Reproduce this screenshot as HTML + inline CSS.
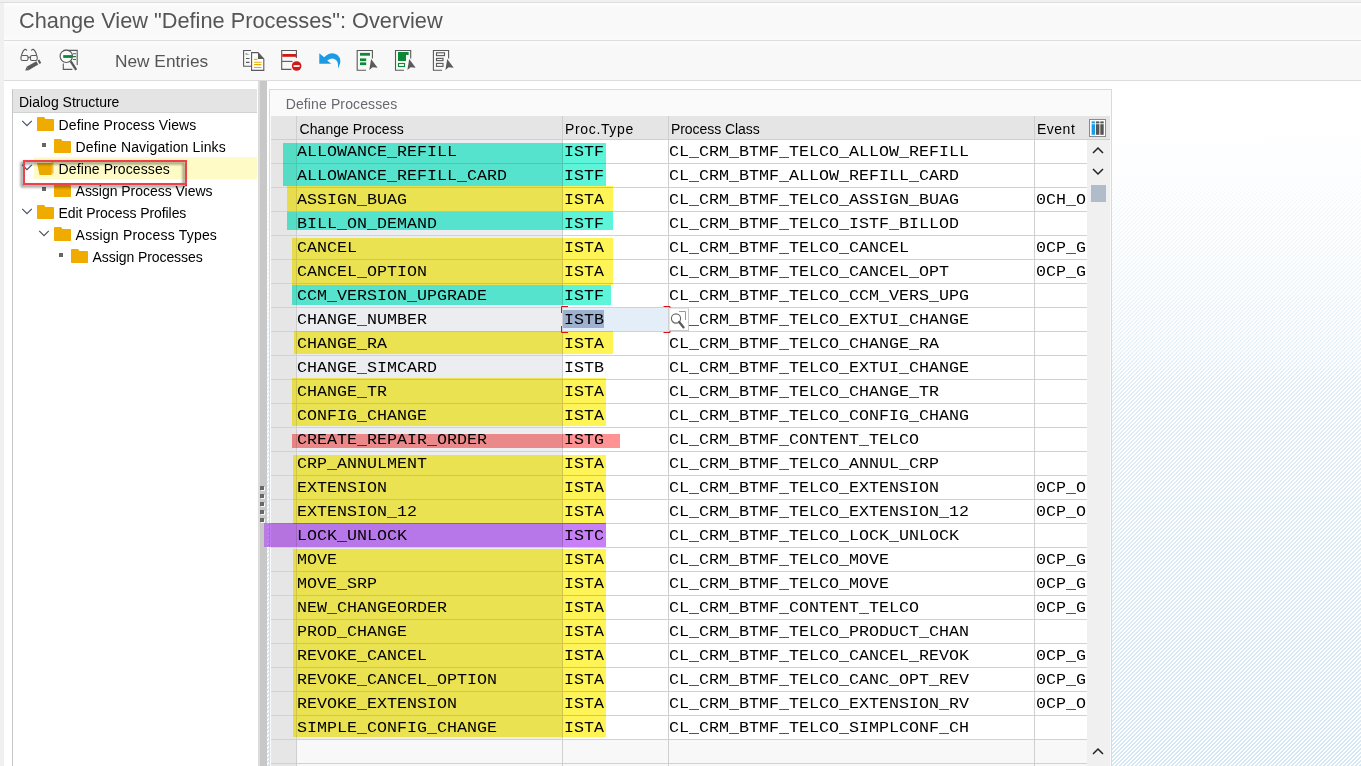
<!DOCTYPE html>
<html lang="en"><head><meta charset="utf-8"><title>Change View "Define Processes": Overview</title>
<style>
html,body{margin:0;padding:0}
body{width:1361px;height:766px;overflow:hidden;position:relative;background:#fff;font-family:"Liberation Sans",sans-serif;font-size:14px;color:#000}
.a{position:absolute}
.t{position:absolute;white-space:nowrap;line-height:1}
.m{position:absolute;white-space:nowrap;line-height:16px;height:16px;font-family:"Liberation Mono",monospace;font-size:14px;transform:scaleX(1.1905);transform-origin:0 0;color:#000}
.hl{position:absolute;mix-blend-mode:multiply}
.cy{background:#5df5da}.ye{background:#fff455}.rd{background:#ff9292}.pu{background:#c880f6}
.rl{position:absolute;left:271px;width:816px;height:1px;background:#d2d2d2}
.cl{position:absolute;top:116px;width:1px;height:650px;background:#cfcfcf}
svg{position:absolute;overflow:visible}
</style></head><body>

<div class="a" style="left:0;top:0;width:1361px;height:2px;background:#f0f0f0"></div>
<div class="a" style="left:0;top:2px;width:1361px;height:1px;background:#dedede"></div>
<div class="a" style="left:0;top:3px;width:1361px;height:37px;background:linear-gradient(#fdfdfd,#f9f9f9 6px,#f9f9f9 30px,#fbfbfb)"></div>
<div class="a" style="left:0;top:40px;width:1361px;height:1px;background:#dedede"></div>
<div class="a" style="left:0;top:41px;width:1361px;height:39px;background:linear-gradient(#fcfcfc,#f8f8f8 6px)"></div>
<div class="a" style="left:0;top:80px;width:1361px;height:1px;background:#dcdcdc"></div>
<div class="a" style="left:0;top:3px;width:4px;height:763px;background:#f0f0f0"></div>
<div class="a" style="left:267px;top:81px;width:1094px;height:685px;background:linear-gradient(to bottom,rgba(255,255,255,1) 0,rgba(255,255,255,1) 49px,rgba(255,255,255,0.3) 339px,rgba(255,255,255,0.04) 100%),repeating-linear-gradient(135deg,#d2e6f4 0,#d2e6f4 1.4px,#fff 1.4px,#fff 2.83px)"></div>
<div class="t" id="title" style="left:19px;top:10px;font-size:21.75px;color:#555">Change View "Define Processes": Overview</div>
<div class="t" id="newent" style="left:115px;top:53px;font-size:17.3px;color:#555">New Entries</div>
<div class="a" style="left:12px;top:89px;width:246px;height:677px;background:#fff;border-left:1px solid #c6c6c6;box-sizing:border-box"></div>
<div class="a" style="left:12px;top:89px;width:245px;height:24px;background:#e4e4e4;border-left:1px solid #c6c6c6;border-bottom:1px solid #d2d2d2;box-sizing:border-box"></div>
<div class="t" id="dlg" style="left:19px;top:95px">Dialog Structure</div>
<div class="a" style="left:34px;top:157px;width:223px;height:22px;background:#fffbc6"></div>
<svg style="left:21px;top:119px" width="12" height="9" viewBox="0 0 12 9"><path d="M1.2 1.8 L6 6.6 L10.8 1.8" fill="none" stroke="#4a5264" stroke-width="1.2"/></svg>
<svg style="left:37px;top:117px" width="17" height="14" viewBox="0 0 17 14"><path d="M0.8 0 H7 L8.5 2 H16.2 Q17 2 17 2.8 V13.2 Q17 14 16.2 14 H0.8 Q0 14 0 13.2 V0.8 Q0 0 0.8 0Z" fill="#f0ab00"/></svg>
<div class="t" id="tr0" style="left:58.6px;top:118px;letter-spacing:0.09px">Define Process Views</div>
<div class="a" style="left:42px;top:143px;width:3.5px;height:3.5px;background:#666"></div>
<svg style="left:54px;top:139px" width="17" height="14" viewBox="0 0 17 14"><path d="M0.8 0 H7 L8.5 2 H16.2 Q17 2 17 2.8 V13.2 Q17 14 16.2 14 H0.8 Q0 14 0 13.2 V0.8 Q0 0 0.8 0Z" fill="#f0ab00"/></svg>
<div class="t" id="tr1" style="left:75.6px;top:140px;letter-spacing:0.14px">Define Navigation Links</div>
<svg style="left:21px;top:163px" width="12" height="9" viewBox="0 0 12 9"><path d="M1.2 1.8 L6 6.6 L10.8 1.8" fill="none" stroke="#4a5264" stroke-width="1.2"/></svg>
<svg style="left:37px;top:161px" width="17" height="14" viewBox="0 0 17 14"><path d="M0 2 H16 L14.5 14 H2.5 Z" fill="#eba900"/><path d="M14.5 0.5 H16.5 V12 L14.5 14Z" fill="#f5c040"/></svg>
<div class="t" id="tr2" style="left:58.6px;top:162px;letter-spacing:0.1px">Define Processes</div>
<div class="a" style="left:42px;top:187px;width:3.5px;height:3.5px;background:#666"></div>
<svg style="left:54px;top:183px" width="17" height="14" viewBox="0 0 17 14"><path d="M0.8 0 H7 L8.5 2 H16.2 Q17 2 17 2.8 V13.2 Q17 14 16.2 14 H0.8 Q0 14 0 13.2 V0.8 Q0 0 0.8 0Z" fill="#f0ab00"/></svg>
<div class="t" id="tr3" style="left:75.6px;top:184px;letter-spacing:-0.03px">Assign Process Views</div>
<svg style="left:21px;top:207px" width="12" height="9" viewBox="0 0 12 9"><path d="M1.2 1.8 L6 6.6 L10.8 1.8" fill="none" stroke="#4a5264" stroke-width="1.2"/></svg>
<svg style="left:37px;top:205px" width="17" height="14" viewBox="0 0 17 14"><path d="M0.8 0 H7 L8.5 2 H16.2 Q17 2 17 2.8 V13.2 Q17 14 16.2 14 H0.8 Q0 14 0 13.2 V0.8 Q0 0 0.8 0Z" fill="#f0ab00"/></svg>
<div class="t" id="tr4" style="left:58.6px;top:206px;letter-spacing:-0.07px">Edit Process Profiles</div>
<svg style="left:38px;top:229px" width="12" height="9" viewBox="0 0 12 9"><path d="M1.2 1.8 L6 6.6 L10.8 1.8" fill="none" stroke="#4a5264" stroke-width="1.2"/></svg>
<svg style="left:54px;top:227px" width="17" height="14" viewBox="0 0 17 14"><path d="M0.8 0 H7 L8.5 2 H16.2 Q17 2 17 2.8 V13.2 Q17 14 16.2 14 H0.8 Q0 14 0 13.2 V0.8 Q0 0 0.8 0Z" fill="#f0ab00"/></svg>
<div class="t" id="tr5" style="left:75.6px;top:228px;letter-spacing:0.2px">Assign Process Types</div>
<div class="a" style="left:59px;top:253px;width:3.5px;height:3.5px;background:#666"></div>
<svg style="left:71px;top:249px" width="17" height="14" viewBox="0 0 17 14"><path d="M0.8 0 H7 L8.5 2 H16.2 Q17 2 17 2.8 V13.2 Q17 14 16.2 14 H0.8 Q0 14 0 13.2 V0.8 Q0 0 0.8 0Z" fill="#f0ab00"/></svg>
<div class="t" id="tr6" style="left:92.6px;top:250px;letter-spacing:-0.08px">Assign Processes</div>
<div class="a" style="left:23px;top:160px;width:164px;height:25px;box-sizing:border-box;border:2.6px solid #f04048;filter:drop-shadow(-1.5px 2.5px 1.6px rgba(0,0,0,0.55))"></div>
<div class="a" style="left:258px;top:81px;width:9px;height:685px;background:linear-gradient(to right,#dcdcdc 0,#dcdcdc 1.5px,#c8c8c8 2.5px)"></div>
<div class="a" style="left:260px;top:486px;width:4px;height:4px;background:#686868;box-shadow:1px 1px 0 #f6f6f6"></div>
<div class="a" style="left:260px;top:494px;width:4px;height:4px;background:#686868;box-shadow:1px 1px 0 #f6f6f6"></div>
<div class="a" style="left:260px;top:502px;width:4px;height:4px;background:#686868;box-shadow:1px 1px 0 #f6f6f6"></div>
<div class="a" style="left:260px;top:510px;width:4px;height:4px;background:#686868;box-shadow:1px 1px 0 #f6f6f6"></div>
<div class="a" style="left:260px;top:518px;width:4px;height:4px;background:#686868;box-shadow:1px 1px 0 #f6f6f6"></div>
<div class="a" style="left:269px;top:89px;width:843px;height:680px;background:#fafafa;border:1px solid #dadada;box-sizing:border-box"></div>
<div class="t" id="grp" style="left:285.7px;top:97px;color:#686870;letter-spacing:0.12px">Define Processes</div>
<div class="a" style="left:271px;top:116px;width:839px;height:23px;background:#e5e5e5"></div>
<div class="a" style="left:271px;top:139px;width:25px;height:627px;background:#e6e6e6"></div>
<div class="a" style="left:297px;top:139px;width:790px;height:600px;background:#fff"></div>
<div class="a" style="left:297px;top:139px;width:265px;height:600px;background:#ebedf1"></div>
<div class="a" style="left:297px;top:739px;width:790px;height:30px;background:#f8f8f8"></div>
<div class="a" style="left:1087px;top:139px;width:23px;height:627px;background:#f0f0f0"></div>
<div class="t" id="h1" style="left:299.6px;top:122px;letter-spacing:0.05px">Change Process</div>
<div class="t" id="h2" style="left:565px;top:122px;letter-spacing:0.65px">Proc.Type</div>
<div class="t" id="h3" style="left:671px;top:122px;letter-spacing:-0.07px">Process Class</div>
<div class="t" id="h4" style="left:1037px;top:122px;letter-spacing:0.5px">Event</div>
<div class="a" style="left:563px;top:308px;width:105px;height:23px;background:#e3eef8"></div>
<div class="a" style="left:563px;top:310px;width:41px;height:18px;background:#9eb1cf"></div>
<div class="m" style="left:297px;top:144px">ALLOWANCE_REFILL</div>
<div class="m" style="left:563.7px;top:144px">ISTF</div>
<div class="m" style="left:669.2px;top:144px">CL_CRM_BTMF_TELCO_ALLOW_REFILL</div>
<div class="m" style="left:297px;top:168px">ALLOWANCE_REFILL_CARD</div>
<div class="m" style="left:563.7px;top:168px">ISTF</div>
<div class="m" style="left:669.2px;top:168px">CL_CRM_BTMF_ALLOW_REFILL_CARD</div>
<div class="m" style="left:297px;top:192px">ASSIGN_BUAG</div>
<div class="m" style="left:563.7px;top:192px">ISTA</div>
<div class="m" style="left:669.2px;top:192px">CL_CRM_BTMF_TELCO_ASSIGN_BUAG</div>
<div class="a" style="left:1035px;top:188px;width:51px;height:22px;overflow:hidden"><div class="m" style="left:1px;top:4px">0CH_O</div></div>
<div class="m" style="left:297px;top:216px">BILL_ON_DEMAND</div>
<div class="m" style="left:563.7px;top:216px">ISTF</div>
<div class="m" style="left:669.2px;top:216px">CL_CRM_BTMF_TELCO_ISTF_BILLOD</div>
<div class="m" style="left:297px;top:240px">CANCEL</div>
<div class="m" style="left:563.7px;top:240px">ISTA</div>
<div class="m" style="left:669.2px;top:240px">CL_CRM_BTMF_TELCO_CANCEL</div>
<div class="a" style="left:1035px;top:236px;width:51px;height:22px;overflow:hidden"><div class="m" style="left:1px;top:4px">0CP_G</div></div>
<div class="m" style="left:297px;top:264px">CANCEL_OPTION</div>
<div class="m" style="left:563.7px;top:264px">ISTA</div>
<div class="m" style="left:669.2px;top:264px">CL_CRM_BTMF_TELCO_CANCEL_OPT</div>
<div class="a" style="left:1035px;top:260px;width:51px;height:22px;overflow:hidden"><div class="m" style="left:1px;top:4px">0CP_G</div></div>
<div class="m" style="left:297px;top:288px">CCM_VERSION_UPGRADE</div>
<div class="m" style="left:563.7px;top:288px">ISTF</div>
<div class="m" style="left:669.2px;top:288px">CL_CRM_BTMF_TELCO_CCM_VERS_UPG</div>
<div class="m" style="left:297px;top:312px">CHANGE_NUMBER</div>
<div class="m" style="left:563.7px;top:312px">ISTB</div>
<div class="m" style="left:669.2px;top:312px">CL_CRM_BTMF_TELCO_EXTUI_CHANGE</div>
<div class="m" style="left:297px;top:336px">CHANGE_RA</div>
<div class="m" style="left:563.7px;top:336px">ISTA</div>
<div class="m" style="left:669.2px;top:336px">CL_CRM_BTMF_TELCO_CHANGE_RA</div>
<div class="m" style="left:297px;top:360px">CHANGE_SIMCARD</div>
<div class="m" style="left:563.7px;top:360px">ISTB</div>
<div class="m" style="left:669.2px;top:360px">CL_CRM_BTMF_TELCO_EXTUI_CHANGE</div>
<div class="m" style="left:297px;top:384px">CHANGE_TR</div>
<div class="m" style="left:563.7px;top:384px">ISTA</div>
<div class="m" style="left:669.2px;top:384px">CL_CRM_BTMF_TELCO_CHANGE_TR</div>
<div class="m" style="left:297px;top:408px">CONFIG_CHANGE</div>
<div class="m" style="left:563.7px;top:408px">ISTA</div>
<div class="m" style="left:669.2px;top:408px">CL_CRM_BTMF_TELCO_CONFIG_CHANG</div>
<div class="m" style="left:297px;top:432px">CREATE_REPAIR_ORDER</div>
<div class="m" style="left:563.7px;top:432px">ISTG</div>
<div class="m" style="left:669.2px;top:432px">CL_CRM_BTMF_CONTENT_TELCO</div>
<div class="m" style="left:297px;top:456px">CRP_ANNULMENT</div>
<div class="m" style="left:563.7px;top:456px">ISTA</div>
<div class="m" style="left:669.2px;top:456px">CL_CRM_BTMF_TELCO_ANNUL_CRP</div>
<div class="m" style="left:297px;top:480px">EXTENSION</div>
<div class="m" style="left:563.7px;top:480px">ISTA</div>
<div class="m" style="left:669.2px;top:480px">CL_CRM_BTMF_TELCO_EXTENSION</div>
<div class="a" style="left:1035px;top:476px;width:51px;height:22px;overflow:hidden"><div class="m" style="left:1px;top:4px">0CP_O</div></div>
<div class="m" style="left:297px;top:504px">EXTENSION_12</div>
<div class="m" style="left:563.7px;top:504px">ISTA</div>
<div class="m" style="left:669.2px;top:504px">CL_CRM_BTMF_TELCO_EXTENSION_12</div>
<div class="a" style="left:1035px;top:500px;width:51px;height:22px;overflow:hidden"><div class="m" style="left:1px;top:4px">0CP_O</div></div>
<div class="m" style="left:297px;top:528px">LOCK_UNLOCK</div>
<div class="m" style="left:563.7px;top:528px">ISTC</div>
<div class="m" style="left:669.2px;top:528px">CL_CRM_BTMF_TELCO_LOCK_UNLOCK</div>
<div class="m" style="left:297px;top:552px">MOVE</div>
<div class="m" style="left:563.7px;top:552px">ISTA</div>
<div class="m" style="left:669.2px;top:552px">CL_CRM_BTMF_TELCO_MOVE</div>
<div class="a" style="left:1035px;top:548px;width:51px;height:22px;overflow:hidden"><div class="m" style="left:1px;top:4px">0CP_G</div></div>
<div class="m" style="left:297px;top:576px">MOVE_SRP</div>
<div class="m" style="left:563.7px;top:576px">ISTA</div>
<div class="m" style="left:669.2px;top:576px">CL_CRM_BTMF_TELCO_MOVE</div>
<div class="a" style="left:1035px;top:572px;width:51px;height:22px;overflow:hidden"><div class="m" style="left:1px;top:4px">0CP_G</div></div>
<div class="m" style="left:297px;top:600px">NEW_CHANGEORDER</div>
<div class="m" style="left:563.7px;top:600px">ISTA</div>
<div class="m" style="left:669.2px;top:600px">CL_CRM_BTMF_CONTENT_TELCO</div>
<div class="a" style="left:1035px;top:596px;width:51px;height:22px;overflow:hidden"><div class="m" style="left:1px;top:4px">0CP_G</div></div>
<div class="m" style="left:297px;top:624px">PROD_CHANGE</div>
<div class="m" style="left:563.7px;top:624px">ISTA</div>
<div class="m" style="left:669.2px;top:624px">CL_CRM_BTMF_TELCO_PRODUCT_CHAN</div>
<div class="m" style="left:297px;top:648px">REVOKE_CANCEL</div>
<div class="m" style="left:563.7px;top:648px">ISTA</div>
<div class="m" style="left:669.2px;top:648px">CL_CRM_BTMF_TELCO_CANCEL_REVOK</div>
<div class="a" style="left:1035px;top:644px;width:51px;height:22px;overflow:hidden"><div class="m" style="left:1px;top:4px">0CP_G</div></div>
<div class="m" style="left:297px;top:672px">REVOKE_CANCEL_OPTION</div>
<div class="m" style="left:563.7px;top:672px">ISTA</div>
<div class="m" style="left:669.2px;top:672px">CL_CRM_BTMF_TELCO_CANC_OPT_REV</div>
<div class="a" style="left:1035px;top:668px;width:51px;height:22px;overflow:hidden"><div class="m" style="left:1px;top:4px">0CP_G</div></div>
<div class="m" style="left:297px;top:696px">REVOKE_EXTENSION</div>
<div class="m" style="left:563.7px;top:696px">ISTA</div>
<div class="m" style="left:669.2px;top:696px">CL_CRM_BTMF_TELCO_EXTENSION_RV</div>
<div class="a" style="left:1035px;top:692px;width:51px;height:22px;overflow:hidden"><div class="m" style="left:1px;top:4px">0CP_O</div></div>
<div class="m" style="left:297px;top:720px">SIMPLE_CONFIG_CHANGE</div>
<div class="m" style="left:563.7px;top:720px">ISTA</div>
<div class="m" style="left:669.2px;top:720px">CL_CRM_BTMF_TELCO_SIMPLCONF_CH</div>
<div class="a" style="left:271px;top:139px;width:839px;height:1px;background:#cfcfcf"></div>
<div class="rl" style="top:163px"></div>
<div class="rl" style="top:187px"></div>
<div class="rl" style="top:211px"></div>
<div class="rl" style="top:235px"></div>
<div class="rl" style="top:259px"></div>
<div class="rl" style="top:283px"></div>
<div class="rl" style="top:307px"></div>
<div class="rl" style="top:331px"></div>
<div class="rl" style="top:355px"></div>
<div class="rl" style="top:379px"></div>
<div class="rl" style="top:403px"></div>
<div class="rl" style="top:427px"></div>
<div class="rl" style="top:451px"></div>
<div class="rl" style="top:475px"></div>
<div class="rl" style="top:499px"></div>
<div class="rl" style="top:523px"></div>
<div class="rl" style="top:547px"></div>
<div class="rl" style="top:571px"></div>
<div class="rl" style="top:595px"></div>
<div class="rl" style="top:619px"></div>
<div class="rl" style="top:643px"></div>
<div class="rl" style="top:667px"></div>
<div class="rl" style="top:691px"></div>
<div class="rl" style="top:715px"></div>
<div class="rl" style="top:739px"></div>
<div class="rl" style="top:763px"></div>
<div class="cl" style="left:296px"></div>
<div class="cl" style="left:562px"></div>
<div class="cl" style="left:668px"></div>
<div class="cl" style="left:1034px"></div>
<div class="hl cy" style="left:283px;top:143px;width:323px;height:43px"></div>
<div class="hl ye" style="left:287px;top:186px;width:326px;height:26px"></div>
<div class="hl cy" style="left:287px;top:212px;width:326px;height:18px"></div>
<div class="hl ye" style="left:292px;top:238px;width:321px;height:47px"></div>
<div class="hl cy" style="left:292px;top:285px;width:319px;height:20px"></div>
<div class="hl ye" style="left:294px;top:331px;width:319px;height:23px"></div>
<div class="hl ye" style="left:292px;top:378px;width:314px;height:48px"></div>
<div class="hl rd" style="left:292px;top:434px;width:328px;height:13.5px"></div>
<div class="hl ye" style="left:293px;top:455px;width:313px;height:68.60000000000002px"></div>
<div class="hl ye" style="left:293px;top:549px;width:313px;height:188px"></div>
<div class="hl pu" style="left:264px;top:522.6px;width:342px;height:24.899999999999977px"></div>
<div class="a" style="left:264px;top:522.6px;width:3px;height:24.9px;background:#b97be0"></div>
<svg style="left:560.9px;top:306px" width="110" height="27" viewBox="0 0 110 27"><path d="M7 0.5 H0.5 V7 M0.5 20 V26.5 H7 M102.5 0.5 H109 V7 M109 20 V26.5 H102.5" fill="none" stroke="#e01010" stroke-width="1"/></svg>
<div class="a" style="left:669px;top:308px;width:20px;height:23px;background:#fff;border:1px solid #c8c8c8;border-left-color:#e6e6e6;border-top-color:#e6e6e6;box-sizing:border-box"></div>
<svg style="left:669px;top:308px" width="20" height="23" viewBox="0 0 20 23"><path d="M10 3.5 H16.5 V12" fill="none" stroke="#999" stroke-width="1"/><circle cx="7" cy="10.5" r="4.6" fill="#fff" stroke="#666" stroke-width="1.1"/><path d="M10.2 14 L14.6 19.4" stroke="#5a5a5a" stroke-width="2.3" stroke-linecap="round"/></svg>
<svg style="left:1089px;top:119px" width="17" height="18" viewBox="0 0 17 18"><rect x="0.5" y="0.5" width="16" height="17" fill="#fff" stroke="#8a8a8a"/><rect x="2.6" y="2.4" width="3.5" height="2" fill="#1b9be8"/><rect x="2.6" y="5.2" width="3.5" height="10.6" fill="#1b9be8"/><rect x="7" y="2.4" width="3.4" height="2" fill="#555"/><rect x="7" y="5.2" width="3.4" height="10.6" fill="#555"/><rect x="11.3" y="2.4" width="3.4" height="2" fill="#555"/><rect x="11.3" y="5.2" width="3.4" height="10.6" fill="#555"/></svg>
<svg style="left:1092px;top:146px" width="12" height="9" viewBox="0 0 12 9"><path d="M1 7 L6 2 L11 7" fill="none" stroke="#222" stroke-width="1.5"/></svg>
<svg style="left:1092px;top:167px" width="12" height="9" viewBox="0 0 12 9"><path d="M1 2 L6 7 L11 2" fill="none" stroke="#222" stroke-width="1.5"/></svg>
<div class="a" style="left:1091px;top:185px;width:15px;height:17px;background:#b1bccb"></div>
<svg style="left:1092px;top:747px" width="12" height="9" viewBox="0 0 12 9"><path d="M1 7 L6 2 L11 7" fill="none" stroke="#222" stroke-width="1.5"/></svg>
<svg style="left:0;top:41px" width="480" height="40" viewBox="0 41 480 40">
<!-- display/change: glasses + pencil -->
<g fill="none" stroke="#5a5a5a" stroke-width="1.1">
<rect x="21" y="55.5" width="7" height="5" rx="1.6"/>
<rect x="30.4" y="55.5" width="6.8" height="5" rx="1.6"/>
<path d="M28 57.3 H30.4"/>
<path d="M21.4 55.6 Q23 50 25 49.4 Q26.4 49.2 26.9 50.6"/>
<path d="M36.8 55.6 Q35.2 50 33.2 49.4 Q31.9 49.2 31.4 50.6"/>
</g>
<path d="M25.2 70.6 L26.6 66.9 L28.8 70.2 Z" fill="#5a5a5a"/>
<path d="M27.6 68.5 L37.3 62.9" stroke="#5a5a5a" stroke-width="3.9" fill="none"/>
<path d="M38.5 62.2 L40.3 61.2" stroke="#5a5a5a" stroke-width="3.9" fill="none"/>
<!-- find in list -->
<g fill="none" stroke="#5a5a5a" stroke-width="1.1">
<path d="M63.5 50.4 H77.2 V65"/>
<path d="M63.3 63.4 V69.4 H72.4"/>
<circle cx="66.3" cy="56.3" r="6.2" fill="#fafafa"/>
</g>
<path d="M70.6 61.2 L76.2 69.8" stroke="#5a5a5a" stroke-width="2.4" fill="none"/>
<rect x="63.2" y="55.1" width="8.8" height="2.8" fill="#0a8a35"/>
<path d="M73 53.7 H76 M73 56.6 H76 M73 59.5 H76" stroke="#0a8a35" stroke-width="1.1" fill="none"/>
<!-- copy as -->
<g fill="none" stroke="#5a5a5a" stroke-width="1.1">
<path d="M251 50.5 H243.6 V66.3 H251"/>
<path d="M246 58.5 H249.5 M246 62.4 H249.5"/>
<path d="M251.6 52.6 H258 L263.8 59 V70.4 H251.6 Z" fill="#fff"/>
</g>
<path d="M245.6 53.2 L249.6 54.6 H245.6 Z" fill="#5a5a5a"/>
<path d="M258 52.6 L263.8 59 H258 Z" fill="#5a5a5a"/>
<path d="M254 59.4 H257.5 M254 62.3 H261.5 M254 64.6 H261.5 M254 67.5 H261.5" stroke="#f0ab00" stroke-width="1.1" fill="none"/>
<!-- delete -->
<g fill="none" stroke="#5a5a5a" stroke-width="1.1">
<path d="M296.4 58 V50.5 H281.7 V69.4 H291.5"/>
<path d="M282 61.4 H292.5"/>
</g>
<rect x="282.3" y="54" width="14" height="2.8" fill="#d01818"/>
<circle cx="296.6" cy="66" r="4.8" fill="#d01818"/>
<rect x="293.6" y="65.2" width="6" height="1.7" fill="#fff"/>
<!-- undo -->
<path d="M319.3 53.2 V63.8 H331.2 L327.2 60.4 Q333.5 56.2 337 61 Q338.8 64 338 68.4 Q343 60 337.5 55 Q331 50.5 324.2 57.2 Z" fill="#1b9be6"/>
<!-- select all -->
<g fill="none" stroke="#5a5a5a" stroke-width="1.1">
<path d="M372.4 58.5 V50.5 H357.2 V70.3 H366"/>
</g>
<rect x="360" y="52.9" width="10" height="2.8" fill="#0a8a35"/>
<rect x="360" y="58.4" width="6.2" height="2.7" fill="#0a8a35"/>
<rect x="360" y="62.4" width="6.2" height="2.7" fill="#0a8a35"/>
<path d="M371.1 59 L377.6 67.8 L372.6 67.2 L369.3 70 Z" fill="#5a5a5a"/>
<!-- select block -->
<g fill="none" stroke="#5a5a5a" stroke-width="1.1">
<path d="M410.7 58.5 V50.5 H395.5 V70.3 H404"/>
</g>
<path d="M398 52 H408.6 V55 H406 V61 H398 Z" fill="#0a8a35"/>
<rect x="398.5" y="63.5" width="6" height="3" fill="none" stroke="#0a8a35" stroke-width="1.1"/>
<path d="M409.2 59 L415.7 67.8 L410.7 67.2 L407.4 70 Z" fill="#5a5a5a"/>
<!-- deselect all -->
<g fill="none" stroke="#5a5a5a" stroke-width="1.1">
<path d="M448.6 58.5 V50.5 H433.4 V70.3 H442"/>
<rect x="436.5" y="52.8" width="8" height="2.8"/>
<rect x="436.5" y="58.4" width="6.5" height="2.2"/>
<rect x="436.5" y="63.4" width="6.5" height="3"/>
</g>
<path d="M447.2 59 L453.7 67.8 L448.7 67.2 L445.4 70 Z" fill="#5a5a5a"/>
</svg>

</body></html>
